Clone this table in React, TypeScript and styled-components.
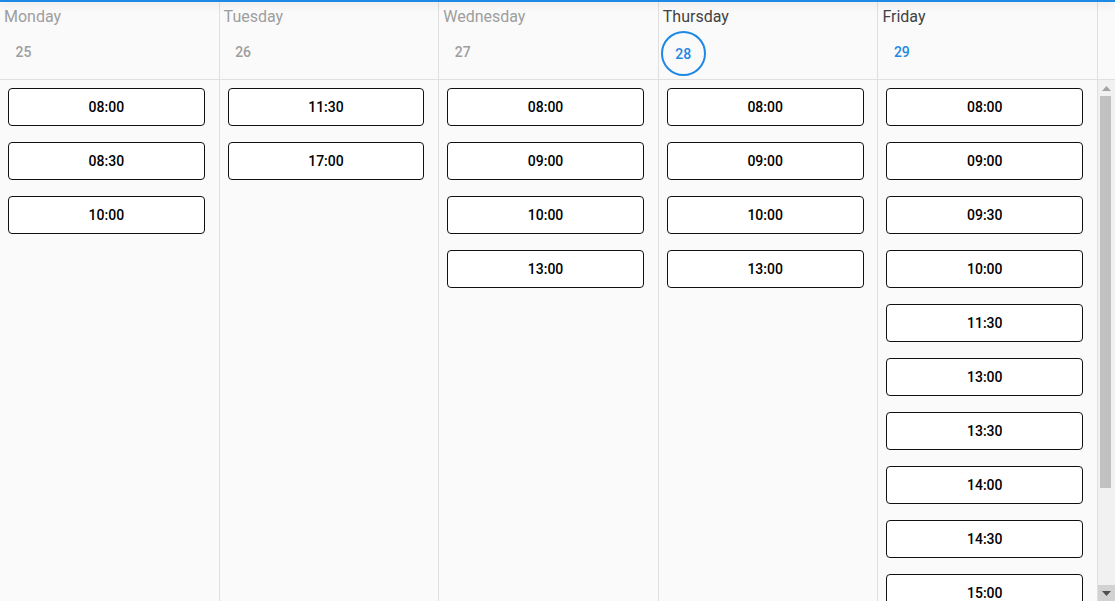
import React from "react";
import styled, { createGlobalStyle } from "styled-components";

const Global = createGlobalStyle`
  html, body { margin: 0; padding: 0; height: 100%; background: #fafafa; }
  body { font-family: Roboto, "Liberation Sans", Arial, sans-serif; overflow: hidden; }
  #root { height: 100%; }
`;

type Day = { name: string; date: number; state: "past" | "today" | "future"; slots: string[] };

const days: Day[] = [
  { name: "Monday", date: 25, state: "past", slots: ["08:00", "08:30", "10:00"] },
  { name: "Tuesday", date: 26, state: "past", slots: ["11:30", "17:00"] },
  { name: "Wednesday", date: 27, state: "past", slots: ["08:00", "09:00", "10:00", "13:00"] },
  { name: "Thursday", date: 28, state: "today", slots: ["08:00", "09:00", "10:00", "13:00"] },
  {
    name: "Friday",
    date: 29,
    state: "future",
    slots: ["08:00", "09:00", "09:30", "10:00", "11:30", "13:00", "13:30", "14:00", "14:30", "15:00", "15:30", "16:00"],
  },
];

const Page = styled.div`
  display: flex;
  flex-direction: column;
  height: 601px;
  background: #fafafa;
`;

const TopLine = styled.div`
  height: 2px;
  background: #1e88e5;
  box-shadow: 0 2px 8px rgba(0, 0, 0, 0.18);
  position: relative;
  z-index: 2;
`;

const HeaderRow = styled.div`
  display: flex;
  height: 77px;
  border-bottom: 1px solid #e0e0e0;
  padding-right: 17px;
  flex-shrink: 0;
`;

const HeaderCell = styled.div`
  flex: 1 1 0;
  min-width: 0;
  border-right: 1px solid #e0e0e0;
  display: flex;
  flex-direction: column;
`;

const DayName = styled.div<{ $dim: boolean }>`
  font-size: 16px;
  line-height: 28px;
  padding: 1px 0 0 4px;
  color: ${(p) => (p.$dim ? "#9e9e9e" : "#424242")};
`;

const DateBadge = styled.div<{ $state: Day["state"] }>`
  margin: 0 0 0 2px;
  width: 45px;
  height: 45px;
  box-sizing: border-box;
  border-radius: 50%;
  display: flex;
  align-items: center;
  justify-content: center;
  font-size: 14px;
  font-weight: 500;
  padding: ${(p) => (p.$state === "today" ? "0" : "0 2px 3px 0")};
  color: ${(p) => (p.$state === "past" ? "#9e9e9e" : "#1e88e5")};
  border: ${(p) => (p.$state === "today" ? "2px solid #1e88e5" : "2px solid transparent")};
`;

const Body = styled.div`
  flex: 1;
  min-height: 0;
  display: flex;
  overflow: hidden;
`;

const Columns = styled.div`
  flex: 1;
  min-width: 0;
  display: flex;
  align-items: stretch;
`;

const Column = styled.div`
  flex: 1 1 0;
  min-width: 0;
  border-right: 1px solid #e0e0e0;
  display: flex;
  flex-direction: column;
  gap: 16px;
  padding: 8px 0;
`;

const SlotButton = styled.button`
  width: 90%;
  margin-left: 8px;
  height: 38px;
  box-sizing: border-box;
  border: 1px solid #111;
  border-radius: 4px;
  background: #fff;
  color: #000;
  font-family: Roboto, "Liberation Sans", Arial, sans-serif;
  font-size: 14px;
  font-weight: 500;
  cursor: pointer;
  padding: 0;
  flex-shrink: 0;
`;

const Scrollbar = styled.div`
  width: 17px;
  flex-shrink: 0;
  background: #f1f1f1;
  display: flex;
  flex-direction: column;
`;

const ScrollArrow = styled.div<{ $active?: boolean }>`
  height: 16px;
  flex-shrink: 0;
  display: flex;
  align-items: center;
  justify-content: center;
  background: ${(p) => (p.$active ? "#d2d2d2" : "#f1f1f1")};
`;

const Track = styled.div`
  flex: 1;
  display: flex;
  flex-direction: column;
`;

const Thumb = styled.div`
  width: 11px;
  margin-left: 2px;
  height: 392px;
  background: #c1c1c1;
`;

export default function App() {
  return (
    <Page>
      <Global />
      <TopLine />
      <HeaderRow>
        {days.map((d) => (
          <HeaderCell key={d.name}>
            <DayName $dim={d.state === "past"}>{d.name}</DayName>
            <DateBadge $state={d.state}>{d.date}</DateBadge>
          </HeaderCell>
        ))}
      </HeaderRow>
      <Body>
        <Columns>
          {days.map((d) => (
            <Column key={d.name}>
              {d.slots.map((s) => (
                <SlotButton key={s}>{s}</SlotButton>
              ))}
            </Column>
          ))}
        </Columns>
        <Scrollbar>
          <ScrollArrow>
            <svg width="9" height="5" viewBox="0 0 9 5">
              <polygon points="0,5 9,5 4.5,0" fill="#a3a3a3" />
            </svg>
          </ScrollArrow>
          <Track>
            <Thumb />
          </Track>
          <ScrollArrow $active>
            <svg width="9" height="5" viewBox="0 0 9 5">
              <polygon points="0,0 9,0 4.5,5" fill="#505050" />
            </svg>
          </ScrollArrow>
        </Scrollbar>
      </Body>
    </Page>
  );
}
